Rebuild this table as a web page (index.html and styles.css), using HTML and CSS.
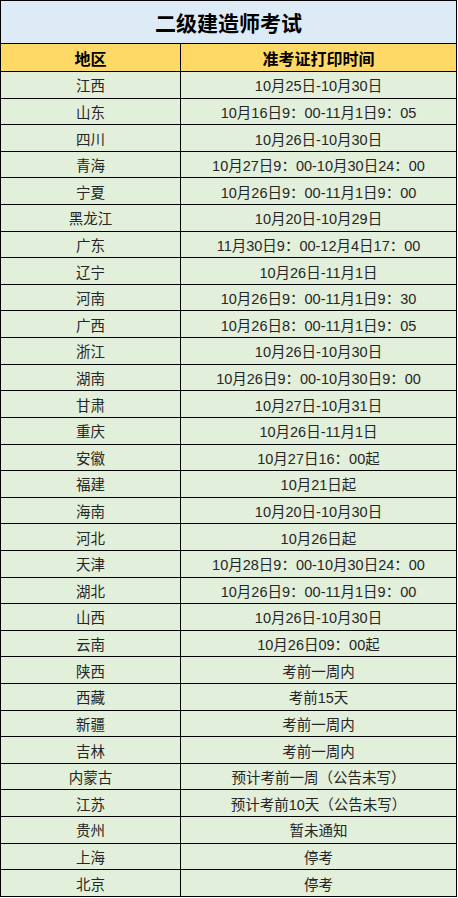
FILE: index.html
```html
<!DOCTYPE html>
<html lang="zh">
<head>
<meta charset="utf-8">
<link rel="stylesheet" href="styles.css">
</head>
<body>
<div class="sheet">
  <div class="title">二级建造师考试</div>
  <div class="row head"><div class="c1">地区</div><div class="c2">准考证打印时间</div></div>
  <div class="body">
    <div class="row"><div class="c1">江西</div><div class="c2">10月25日-10月30日</div></div>
    <div class="row"><div class="c1">山东</div><div class="c2">10月16日9：00-11月1日9：05</div></div>
    <div class="row"><div class="c1">四川</div><div class="c2">10月26日-10月30日</div></div>
    <div class="row"><div class="c1">青海</div><div class="c2">10月27日9：00-10月30日24：00</div></div>
    <div class="row"><div class="c1">宁夏</div><div class="c2">10月26日9：00-11月1日9：00</div></div>
    <div class="row"><div class="c1">黑龙江</div><div class="c2">10月20日-10月29日</div></div>
    <div class="row"><div class="c1">广东</div><div class="c2">11月30日9：00-12月4日17：00</div></div>
    <div class="row"><div class="c1">辽宁</div><div class="c2">10月26日-11月1日</div></div>
    <div class="row"><div class="c1">河南</div><div class="c2">10月26日9：00-11月1日9：30</div></div>
    <div class="row"><div class="c1">广西</div><div class="c2">10月26日8：00-11月1日9：05</div></div>
    <div class="row"><div class="c1">浙江</div><div class="c2">10月26日-10月30日</div></div>
    <div class="row"><div class="c1">湖南</div><div class="c2">10月26日9：00-10月30日9：00</div></div>
    <div class="row"><div class="c1">甘肃</div><div class="c2">10月27日-10月31日</div></div>
    <div class="row"><div class="c1">重庆</div><div class="c2">10月26日-11月1日</div></div>
    <div class="row"><div class="c1">安徽</div><div class="c2">10月27日16：00起</div></div>
    <div class="row"><div class="c1">福建</div><div class="c2">10月21日起</div></div>
    <div class="row"><div class="c1">海南</div><div class="c2">10月20日-10月30日</div></div>
    <div class="row"><div class="c1">河北</div><div class="c2">10月26日起</div></div>
    <div class="row"><div class="c1">天津</div><div class="c2">10月28日9：00-10月30日24：00</div></div>
    <div class="row"><div class="c1">湖北</div><div class="c2">10月26日9：00-11月1日9：00</div></div>
    <div class="row"><div class="c1">山西</div><div class="c2">10月26日-10月30日</div></div>
    <div class="row"><div class="c1">云南</div><div class="c2">10月26日09：00起</div></div>
    <div class="row"><div class="c1">陕西</div><div class="c2">考前一周内</div></div>
    <div class="row"><div class="c1">西藏</div><div class="c2">考前15天</div></div>
    <div class="row"><div class="c1">新疆</div><div class="c2">考前一周内</div></div>
    <div class="row"><div class="c1">吉林</div><div class="c2">考前一周内</div></div>
    <div class="row"><div class="c1">内蒙古</div><div class="c2">预计考前一周（公告未写）</div></div>
    <div class="row"><div class="c1">江苏</div><div class="c2">预计考前10天（公告未写）</div></div>
    <div class="row"><div class="c1">贵州</div><div class="c2">暂未通知</div></div>
    <div class="row"><div class="c1">上海</div><div class="c2">停考</div></div>
    <div class="row"><div class="c1">北京</div><div class="c2">停考</div></div>
  </div>
</div>
</body>
</html>
```

FILE: styles.css
```css
html, body {
  margin: 0;
  padding: 0;
  background: #ffffff;
}
.sheet {
  box-sizing: border-box;
  width: 457px;
  height: 897px;
  border: 1px solid #000;
  display: flex;
  flex-direction: column;
  font-family: "Liberation Sans", "Noto Sans CJK SC", sans-serif;
  color: #262626;
  font-size: 14.5px;
}
.title {
  height: 42px;
  flex: none;
  border-bottom: 1px solid #000;
  background: #ddebf7;
  display: flex;
  align-items: center;
  justify-content: center;
  font-size: 21px;
  font-weight: bold;
  color: #000;
}
.row {
  display: flex;
  background: #e2efda;
  border-bottom: 1px solid #000;
}
.row:last-child {
  border-bottom: none;
}
.head {
  height: 27px;
  flex: none;
  background: #ffd966;
  font-size: 16px;
  font-weight: bold;
  color: #000;
}
.body {
  flex: 1;
  display: flex;
  flex-direction: column;
}
.body .row {
  flex: 1;
}
.c1 {
  box-sizing: border-box;
  width: 180px;
  flex: none;
  border-right: 1px solid #000;
  display: flex;
  align-items: center;
  justify-content: center;
}
.c2 {
  flex: 1;
  display: flex;
  align-items: center;
  justify-content: center;
}
```
